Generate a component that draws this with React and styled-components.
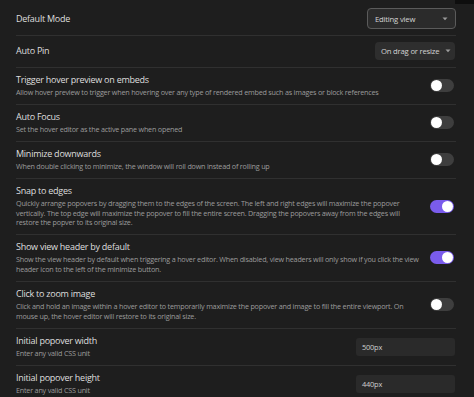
import React from 'react';
import styled, { createGlobalStyle } from 'styled-components';

const GlobalStyle = createGlobalStyle`
  body {
    margin: 0;
    background: #1e1e1e;
    font-family: "Open Sans", "Noto Sans", sans-serif;
  }
`;

const Page = styled.div`
  padding: 0 18px 0 16px;
  height: 397px;
  overflow: hidden;
`;

const ScrollTail = styled.div`
  position: fixed;
  top: 0;
  right: 0;
  width: 19px;
  height: 4px;
  background: #0e0e0e;
`;

const SettingItem = styled.div`
  display: flex;
  align-items: center;
  padding: ${(p) => (p.$first ? '8px 0 6px' : '6px 0 6.7px')};
  border-top: ${(p) => (p.$first ? 'none' : '1px solid #303030')};
`;

const Info = styled.div`
  flex: 1;
  min-width: 0;
  margin-right: 8px;
`;

const Name = styled.div`
  font-size: 9px;
  letter-spacing: -0.25px;
  line-height: 12px;
  color: #dedede;
`;

const Description = styled.div`
  margin-top: 2px;
  font-size: 7.2px;
  letter-spacing: -0.2px;
  line-height: 9.5px;
  color: #9c9c9c;
  white-space: nowrap;
`;

const Dropdown = styled.div`
  display: flex;
  align-items: center;
  justify-content: space-between;
  gap: 6px;
  box-sizing: border-box;
  width: ${(p) => p.$width}px;
  height: ${(p) => (p.$focused ? 21 : 18)}px;
  margin-right: ${(p) => (p.$focused ? 0 : 1)}px;
  padding: 0 7px 0 ${(p) => (p.$focused ? 7 : 6)}px;
  border-radius: 4px;
  background: ${(p) => (p.$focused ? '#2b2b2b' : '#2e2e2e')};
  border: ${(p) => (p.$focused ? '1.5px solid #5b5b5b' : 'none')};
  color: #d4d4d4;
  font-size: 7.7px;
  letter-spacing: -0.2px;
  white-space: nowrap;
`;

const Toggle = styled.div`
  display: flex;
  align-items: center;
  justify-content: ${(p) => (p.$on ? 'flex-end' : 'flex-start')};
  box-sizing: border-box;
  width: 24px;
  height: 13px;
  margin-right: 2px;
  padding: 0 1px;
  border-radius: 7px;
  background: ${(p) => (p.$on ? '#7a5cec' : '#3e3e3e')};
  flex-shrink: 0;
`;

const Knob = styled.div`
  width: 11px;
  height: 11px;
  border-radius: 50%;
  background: #ffffff;
`;

const TextInput = styled.div`
  box-sizing: border-box;
  width: 99px;
  height: 18px;
  margin-right: 1px;
  padding: 0 6px;
  display: flex;
  align-items: center;
  border-radius: 3px;
  background: #2a2a2a;
  color: #cfcfcf;
  font-size: 7.4px;
  letter-spacing: -0.2px;
`;

const Caret = () => (
  <svg width="6" height="4" viewBox="0 0 6 4" style={{ flexShrink: 0 }}>
    <path d="M0.5 0.5 L3 3.2 L5.5 0.5 Z" fill="#9c9c9c" />
  </svg>
);

const settings = [
  { name: 'Default Mode', control: { type: 'select', value: 'Editing view', width: 89, focused: true } },
  { name: 'Auto Pin', control: { type: 'select', value: 'On drag or resize', width: 80 } },
  {
    name: 'Trigger hover preview on embeds',
    desc: ['Allow hover preview to trigger when hovering over any type of rendered embed such as images or block references'],
    control: { type: 'toggle', on: false },
  },
  {
    name: 'Auto Focus',
    desc: ['Set the hover editor as the active pane when opened'],
    control: { type: 'toggle', on: false },
  },
  {
    name: 'Minimize downwards',
    desc: ['When double clicking to minimize, the window will roll down instead of rolling up'],
    control: { type: 'toggle', on: false },
  },
  {
    name: 'Snap to edges',
    desc: [
      'Quickly arrange popovers by dragging them to the edges of the screen. The left and right edges will maximize the popover',
      'vertically. The top edge will maximize the popover to fill the entire screen. Dragging the popovers away from the edges will',
      'restore the popver to its original size.',
    ],
    control: { type: 'toggle', on: true },
  },
  {
    name: 'Show view header by default',
    desc: [
      'Show the view header by default when triggering a hover editor. When disabled, view headers will only show if you click the view',
      'header icon to the left of the minimize button.',
    ],
    control: { type: 'toggle', on: true },
  },
  {
    name: 'Click to zoom image',
    desc: [
      'Click and hold an image within a hover editor to temporarily maximize the popover and image to fill the entire viewport. On',
      'mouse up, the hover editor will restore to its original size.',
    ],
    control: { type: 'toggle', on: false },
  },
  {
    name: 'Initial popover width',
    desc: ['Enter any valid CSS unit'],
    control: { type: 'input', value: '500px' },
  },
  {
    name: 'Initial popover height',
    desc: ['Enter any valid CSS unit'],
    control: { type: 'input', value: '440px' },
  },
];

const Control = ({ control }) => {
  if (control.type === 'select') {
    return (
      <Dropdown $width={control.width} $focused={control.focused}>
        {control.value}
        <Caret />
      </Dropdown>
    );
  }
  if (control.type === 'toggle') {
    return (
      <Toggle $on={control.on}>
        <Knob />
      </Toggle>
    );
  }
  return <TextInput>{control.value}</TextInput>;
};

const App = () => (
  <>
    <GlobalStyle />
    <Page>
      {settings.map((s, i) => (
        <SettingItem key={s.name} $first={i === 0}>
          <Info>
            <Name>{s.name}</Name>
            {s.desc && (
              <Description>
                {s.desc.map((line, j) => (
                  <React.Fragment key={j}>
                    {j > 0 && <br />}
                    {line}
                  </React.Fragment>
                ))}
              </Description>
            )}
          </Info>
          <Control control={s.control} />
        </SettingItem>
      ))}
    </Page>
    <ScrollTail />
  </>
);

export default App;
